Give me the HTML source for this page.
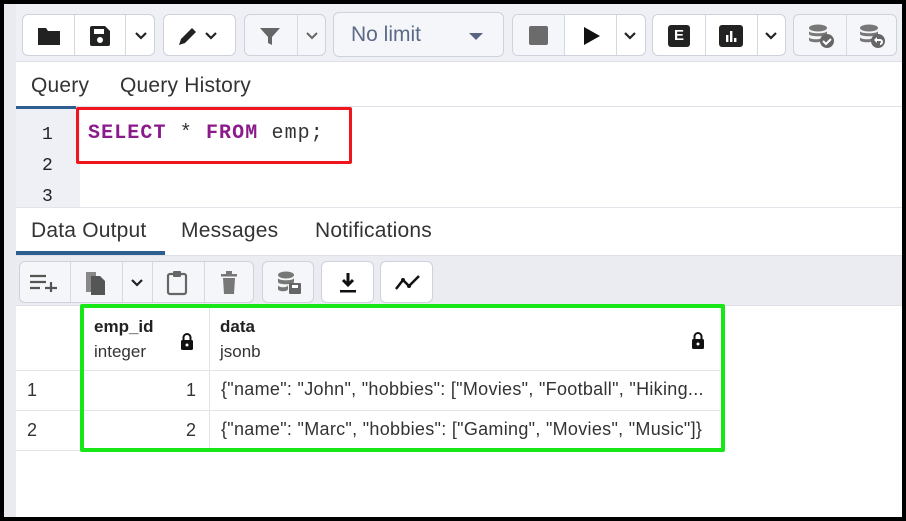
<!DOCTYPE html>
<html><head><style>
*{margin:0;padding:0;box-sizing:border-box}
body{width:906px;height:521px;background:#000;position:relative;overflow:hidden;font-family:"Liberation Sans",sans-serif;color:#222}
.a{position:absolute}
.grp{position:absolute;border:1px solid #cdd2dc;border-radius:6px;background:#fff;overflow:hidden}
.sep{position:absolute;top:0;bottom:0;width:1px;background:#d4d8e2}
.tab{position:absolute;font-size:21px;color:#333;letter-spacing:0.2px}
.mono{font-family:"Liberation Mono",monospace}
</style></head><body>
<div class="a" style="left:4px;top:4px;width:898px;height:513px;background:#fff"></div>
<div class="a" style="left:4px;top:4px;width:12px;height:513px;background:#e9ebef"></div>
<div class="a" style="left:16px;top:4px;width:886px;height:58px;background:#eef0f5;border-bottom:1px solid #dde0e6"></div>
<div class="grp" style="left:22px;top:14px;width:133px;height:42px">
 <div class="sep" style="left:51px"></div><div class="sep" style="left:102px"></div>
 <svg class="a" style="left:14px;top:11px" width="24" height="20"><path d="M1 2h8l2 3h12v14H1z" fill="#222"/></svg>
 <svg class="a" style="left:66px;top:10px" width="22" height="22"><path d="M1 3a2 2 0 0 1 2-2h13l5 5v13a2 2 0 0 1-2 2H3a2 2 0 0 1-2-2z" fill="#222"/><rect x="5" y="4" width="10" height="5" fill="#fff"/><circle cx="11" cy="15" r="3" fill="#fff"/></svg>
 <svg class="a" style="left:111px;top:16px" width="14" height="10"><path d="M2 2l5 5 5-5" stroke="#222" stroke-width="2.2" fill="none"/></svg>
</div>
<div class="grp" style="left:163px;top:14px;width:73px;height:42px">
 <svg class="a" style="left:12px;top:10px" width="24" height="22"><path d="M3 20l2-6L16 3l4 4L9 18z" fill="#222"/></svg>
 <svg class="a" style="left:40px;top:16px" width="14" height="10"><path d="M2 2l5 5 5-5" stroke="#222" stroke-width="2.2" fill="none"/></svg>
</div>
<div class="grp" style="left:244px;top:14px;width:82px;height:42px;background:#f5f6f9">
 <div class="sep" style="left:52px"></div>
 <svg class="a" style="left:14px;top:11px" width="22" height="22"><path d="M1 2h20l-8 9v8l-4-2v-6z" fill="#666"/></svg>
 <svg class="a" style="left:60px;top:16px" width="14" height="10"><path d="M2 2l5 5 5-5" stroke="#666" stroke-width="2" fill="none"/></svg>
</div>
<div class="grp" style="left:333px;top:12px;width:171px;height:45px;background:#f5f6f9">
 <div class="a" style="left:17px;top:10px;font-size:21px;color:#5b6a87">No limit</div>
 <svg class="a" style="left:134px;top:19px" width="16" height="9"><path d="M1 1h14L8 8z" fill="#5b6382"/></svg>
</div>
<div class="grp" style="left:512px;top:14px;width:134px;height:42px">
 <div class="a" style="left:0;top:0;width:51px;height:42px;background:#f5f6f9"></div>
 <div class="sep" style="left:51px"></div><div class="sep" style="left:103px"></div>
 <div class="a" style="left:16px;top:11px;width:19px;height:19px;background:#6b6b6b;border-radius:2px"></div>
 <svg class="a" style="left:70px;top:11px" width="18" height="20"><path d="M1 1l16 9-16 9z" fill="#111"/></svg>
 <svg class="a" style="left:110px;top:16px" width="14" height="10"><path d="M2 2l5 5 5-5" stroke="#222" stroke-width="2.2" fill="none"/></svg>
</div>
<div class="grp" style="left:652px;top:14px;width:134px;height:42px">
 <div class="sep" style="left:52px"></div><div class="sep" style="left:104px"></div>
 <div class="a" style="left:15px;top:10px;width:22px;height:22px;background:#222;border-radius:3px;color:#fff;font-size:15px;font-weight:bold;text-align:center;line-height:22px">E</div>
 <svg class="a" style="left:66px;top:10px" width="24" height="22"><rect width="24" height="22" rx="3" fill="#222"/><rect x="7" y="10" width="2.4" height="7" fill="#fff"/><rect x="11" y="6" width="2.4" height="11" fill="#fff"/><rect x="15" y="13" width="2.4" height="4" fill="#fff"/></svg>
 <svg class="a" style="left:111px;top:16px" width="14" height="10"><path d="M2 2l5 5 5-5" stroke="#222" stroke-width="2.2" fill="none"/></svg>
</div>
<div class="grp" style="left:793px;top:14px;width:104px;height:42px;background:#f5f6f9">
 <div class="sep" style="left:52px"></div>
 <svg class="a" style="left:13px;top:8px" width="28" height="26"><ellipse cx="11" cy="5" rx="9" ry="3.5" fill="#777"/><path d="M2 8c0 3 18 3 18 0v3c0 3-18 3-18 0zM2 14c0 3 14 3 14 0v3c0 3-14 3-14 0z" fill="#777"/><circle cx="20" cy="18" r="7" fill="#666"/><path d="M16 18l3 3 5-5" stroke="#fff" stroke-width="2" fill="none"/></svg>
 <svg class="a" style="left:64px;top:8px" width="28" height="26"><ellipse cx="11" cy="5" rx="9" ry="3.5" fill="#777"/><path d="M2 8c0 3 18 3 18 0v3c0 3-18 3-18 0zM2 14c0 3 14 3 14 0v3c0 3-14 3-14 0z" fill="#777"/><circle cx="20" cy="18" r="7" fill="#666"/><path d="M17 17h5a2 2 0 0 1 0 4" stroke="#fff" stroke-width="2" fill="none"/><path d="M16 17l3-3v6z" fill="#fff"/></svg>
</div>
<div class="tab" style="left:31px;top:74px">Query</div>
<div class="tab" style="left:120px;top:74px">Query History</div>
<div class="a" style="left:16px;top:106px;width:886px;height:1px;background:#dde0e6"></div>
<div class="a" style="left:16px;top:106px;width:60px;height:3px;background:#2c5f8f"></div>
<div class="a" style="left:16px;top:109px;width:64px;height:98px;background:#eef0f5"></div>
<div class="a mono" style="left:42px;top:120px;font-size:18px;line-height:31px;color:#222">1<br>2<br>3</div>
<div class="a mono" style="left:88px;top:122px;font-size:20px;letter-spacing:1.1px;color:#333"><span style="color:#8b1a8b;font-weight:bold">SELECT</span> * <span style="color:#8b1a8b;font-weight:bold">FROM</span> emp;</div>
<div class="a" style="left:76px;top:107px;width:276px;height:57px;border:3.5px solid #f0141e;border-radius:2px"></div>
<div class="a" style="left:16px;top:207px;width:886px;height:1px;background:#e2e4ea"></div>
<div class="tab" style="left:31px;top:219px">Data Output</div>
<div class="tab" style="left:181px;top:219px">Messages</div>
<div class="tab" style="left:315px;top:219px">Notifications</div>
<div class="a" style="left:16px;top:251px;width:149px;height:4px;background:#2c5f8f"></div>
<div class="a" style="left:16px;top:255px;width:886px;height:50px;background:#eaecf1;border-top:1px solid #dde0e6"></div>
<div class="grp" style="left:19px;top:261px;width:235px;height:42px;background:#f5f6f9">
 <div class="sep" style="left:50px"></div><div class="sep" style="left:102px"></div><div class="sep" style="left:132px"></div><div class="sep" style="left:184px"></div>
 <svg class="a" style="left:9px;top:12px" width="32" height="18"><path d="M1 2h16M1 8h16M1 14h10M16 14h12M22 8v12" stroke="#555" stroke-width="2.2"/></svg>
 <svg class="a" style="left:64px;top:8px" width="24" height="26"><path d="M2 2h10v20H2z" fill="#888"/><path d="M7 6h9l5 5v14H7z" fill="#555"/></svg>
 <svg class="a" style="left:110px;top:16px" width="14" height="10"><path d="M2 2l5 5 5-5" stroke="#222" stroke-width="2.2" fill="none"/></svg>
 <svg class="a" style="left:146px;top:8px" width="22" height="26"><rect x="2" y="4" width="18" height="20" rx="2" stroke="#666" stroke-width="2.2" fill="none"/><rect x="7" y="1" width="8" height="6" rx="1" fill="#666"/></svg>
 <svg class="a" style="left:200px;top:9px" width="18" height="24"><rect x="1" y="3" width="16" height="2.5" fill="#777"/><rect x="6" y="0" width="6" height="3" fill="#777"/><path d="M3 7h12l-1 16H4z" fill="#777"/></svg>
</div>
<div class="grp" style="left:262px;top:261px;width:52px;height:42px;background:#f5f6f9">
 <svg class="a" style="left:13px;top:8px" width="28" height="26"><ellipse cx="10" cy="5" rx="8" ry="3.5" fill="#777"/><path d="M2 8c0 3 16 3 16 0v4c0 3-16 3-16 0zM2 15c0 3 10 3 10 0v4c0 3-10 3-10 0z" fill="#777"/><rect x="13" y="13" width="12" height="11" rx="1" fill="#666"/><rect x="16" y="15" width="6" height="3" fill="#fff"/></svg>
</div>
<div class="grp" style="left:321px;top:261px;width:53px;height:42px">
 <svg class="a" style="left:16px;top:10px" width="20" height="22"><path d="M10 1v11M5 8l5 5 5-5" stroke="#111" stroke-width="3" fill="none"/><rect x="2" y="18" width="16" height="2.5" fill="#111"/></svg>
</div>
<div class="grp" style="left:380px;top:261px;width:53px;height:42px">
 <svg class="a" style="left:13px;top:12px" width="28" height="18"><path d="M2 15l7-9 6 6 10-10" stroke="#111" stroke-width="2.5" fill="none"/><circle cx="9" cy="6" r="2" fill="#111"/><circle cx="15" cy="12" r="2" fill="#111"/></svg>
</div>
<div class="a" style="left:16px;top:305px;width:886px;height:1px;background:#dde0e6"></div>
<div class="a" style="left:16px;top:370px;width:704px;height:1px;background:#e2e4ea"></div>
<div class="a" style="left:16px;top:410px;width:704px;height:1px;background:#e2e4ea"></div>
<div class="a" style="left:16px;top:450px;width:704px;height:1px;background:#e2e4ea"></div>
<div class="a" style="left:209px;top:305px;width:1px;height:146px;background:#e2e4ea"></div>
<div class="a" style="left:94px;top:317px;font-size:17px;font-weight:bold;color:#222">emp_id</div>
<div class="a" style="left:94px;top:342px;font-size:17px;color:#333">integer</div>
<svg class="a" style="left:180px;top:332px" width="14" height="18"><path d="M3.5 8V5.5a3.5 3.5 0 0 1 7 0V8" stroke="#111" stroke-width="2" fill="none"/><rect x="1" y="8" width="12" height="10" rx="1.5" fill="#111"/><circle cx="7" cy="13" r="1.5" fill="#fff"/></svg>
<div class="a" style="left:220px;top:317px;font-size:17px;font-weight:bold;color:#222">data</div>
<div class="a" style="left:220px;top:342px;font-size:17px;color:#333">jsonb</div>
<svg class="a" style="left:691px;top:331px" width="14" height="18"><path d="M3.5 8V5.5a3.5 3.5 0 0 1 7 0V8" stroke="#111" stroke-width="2" fill="none"/><rect x="1" y="8" width="12" height="10" rx="1.5" fill="#111"/><circle cx="7" cy="13" r="1.5" fill="#fff"/></svg>
<div class="a" style="left:27px;top:380px;font-size:18px;color:#333">1</div>
<div class="a" style="left:27px;top:420px;font-size:18px;color:#333">2</div>
<div class="a" style="left:186px;top:380px;font-size:18px;color:#333">1</div>
<div class="a" style="left:186px;top:420px;font-size:18px;color:#333">2</div>
<div class="a" style="left:221px;top:379px;font-size:18px;color:#333;letter-spacing:0.3px;white-space:nowrap">{"name": "John", "hobbies": ["Movies", "Football", "Hiking...</div>
<div class="a" style="left:221px;top:419px;font-size:18px;color:#333;letter-spacing:0.3px;white-space:nowrap">{"name": "Marc", "hobbies": ["Gaming", "Movies", "Music"]}</div>
<div class="a" style="left:80px;top:304px;width:645px;height:148px;border:4px solid #17e617;border-radius:2px"></div>
</body></html>
